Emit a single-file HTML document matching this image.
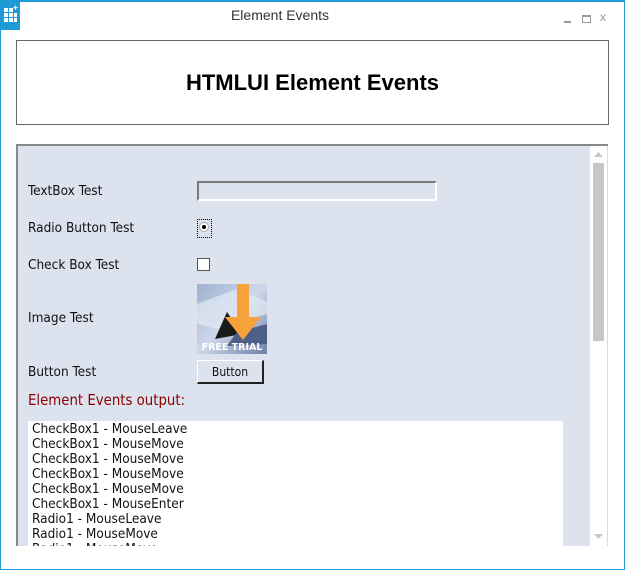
<!DOCTYPE html>
<html><head><meta charset="utf-8"><style>
*{margin:0;padding:0;box-sizing:border-box}
body{width:625px;height:570px;background:#fff;position:relative;overflow:hidden;font-family:"DejaVu Sans Condensed","Liberation Sans",sans-serif;}
.ab{position:absolute}
.lbl{position:absolute;left:28px;font-size:13.5px;color:#111;letter-spacing:0}
.out div{height:15px;line-height:15px}
</style></head><body>
<div class="ab" style="left:0;top:0;width:625px;height:570px;border:1px solid #1e9ad6;border-top:2px solid #1e9ad6"></div>
<div class="ab" style="left:0;top:0;width:20px;height:30px;background:#1e9ad6">
<svg width="20" height="30" viewBox="0 0 20 30"><g fill="#fff"><rect x="4" y="8" width="4" height="4"/><rect x="9" y="8" width="4" height="4"/><rect x="4" y="13" width="4" height="4"/><rect x="9" y="13" width="4" height="4"/><rect x="14" y="13" width="3" height="4"/><rect x="4" y="18" width="4" height="4"/><rect x="9" y="18" width="4" height="4"/><rect x="14" y="18" width="3" height="4"/><path d="M15.5 5l.8 2 2 .6-2 .7-.8 2-.8-2-2-.7 2-.6z"/></g></svg></div>
<div class="ab" style="left:0;top:7px;width:560px;text-align:center;font-family:'Liberation Sans',sans-serif;font-size:14px;color:#333">Element Events</div>
<div class="ab" style="left:564px;top:21px;width:7px;height:2px;background:#999"></div>
<div class="ab" style="left:582px;top:15px;width:9px;height:8px;border:1px solid #999;border-top-width:2px"></div>
<div class="ab" style="left:600px;top:10px;font-family:'Liberation Sans',sans-serif;font-size:12px;color:#999">x</div>
<div class="ab" style="left:16px;top:40px;width:593px;height:85px;border:1px solid #666;text-align:center;line-height:83px;font-family:'Liberation Sans',sans-serif;font-weight:bold;font-size:22px;color:#000">HTMLUI Element Events</div>
<div class="ab" style="left:16px;top:144px;width:592px;height:402px;background:#dce2ee;border-top:2px solid #888;border-left:2px solid #888"></div>
<div class="ab" style="left:590px;top:146px;width:18px;height:400px;background:#fff;border-right:1px solid #ddd"></div>
<div class="ab" style="left:593px;top:163px;width:11px;height:178px;background:#c6c6c6"></div>
<svg class="ab" style="left:593px;top:150px" width="11" height="8"><path d="M1 7L5.5 2L10 7z" fill="#c6c6c6"/></svg>
<svg class="ab" style="left:593px;top:533px" width="11" height="8"><path d="M1 1L5.5 6L10 1z" fill="#c6c6c6"/></svg>
<div class="lbl" style="top:183px">TextBox Test</div>
<div class="ab" style="left:197px;top:181px;width:240px;height:20px;border:2px solid #fff;border-top-color:#7a7a7a;border-left-color:#7a7a7a;background:#dce2ee"></div>
<div class="lbl" style="top:220px">Radio Button Test</div>
<div class="ab" style="left:197px;top:219px;width:15px;height:19px;border:1px dotted #000"></div>
<div class="ab" style="left:199px;top:222px;width:10px;height:10px;border-radius:50%;background:#fff;border:1px solid #aaa"></div>
<div class="ab" style="left:202px;top:225px;width:4px;height:4px;border-radius:50%;background:#000"></div>
<div class="lbl" style="top:257px">Check Box Test</div>
<div class="ab" style="left:197px;top:258px;width:13px;height:13px;background:#fff;border:1px solid #555"></div>
<div class="lbl" style="top:310px">Image Test</div>
<svg class="ab" style="left:197px;top:284px" width="70" height="70" viewBox="0 0 70 70">
<defs><linearGradient id="g" x1="0" y1="0" x2="1" y2="1"><stop offset="0" stop-color="#9fb0cf"/><stop offset=".5" stop-color="#cdd8ea"/><stop offset="1" stop-color="#6b7fa8"/></linearGradient></defs>
<rect width="70" height="70" fill="url(#g)"/>
<path d="M0 20L40 5L70 18L70 30L20 45L0 40z" fill="#e3e9f4" opacity=".7"/>
<path d="M18 55L30 28L45 50z" fill="#1a1a1a"/>
<path d="M40 48L70 40L70 60L30 62z" fill="#4d5f86"/>
<path d="M40 0h12v33h12L46 56L28 33h12z" fill="#f7a13a"/>
<text x="35" y="66" text-anchor="middle" font-family="DejaVu Sans,sans-serif" font-weight="bold" font-size="9.5" fill="#fff">FREE TRIAL</text>
</svg>
<div class="lbl" style="top:364px">Button Test</div>
<div class="ab" style="left:197px;top:360px;width:67px;height:24px;background:#dce2ee;border:1px solid #fff;border-right:2px solid #222;border-bottom:2px solid #222;text-align:center;line-height:22px;font-size:12px;color:#111">Button</div>
<div class="ab" style="left:28px;top:392px;font-size:14.8px;color:#8b0000;letter-spacing:0">Element Events output:</div>
<div class="ab out" style="left:28px;top:421px;width:535px;height:125px;background:#fff;padding:1px 4px 0;font-size:13.5px;color:#111;overflow:hidden">
<div>CheckBox1 - MouseLeave</div><div>CheckBox1 - MouseMove</div><div>CheckBox1 - MouseMove</div><div>CheckBox1 - MouseMove</div><div>CheckBox1 - MouseMove</div><div>CheckBox1 - MouseEnter</div><div>Radio1 - MouseLeave</div><div>Radio1 - MouseMove</div><div>Radio1 - MouseMove</div>
</div>
</body></html>
